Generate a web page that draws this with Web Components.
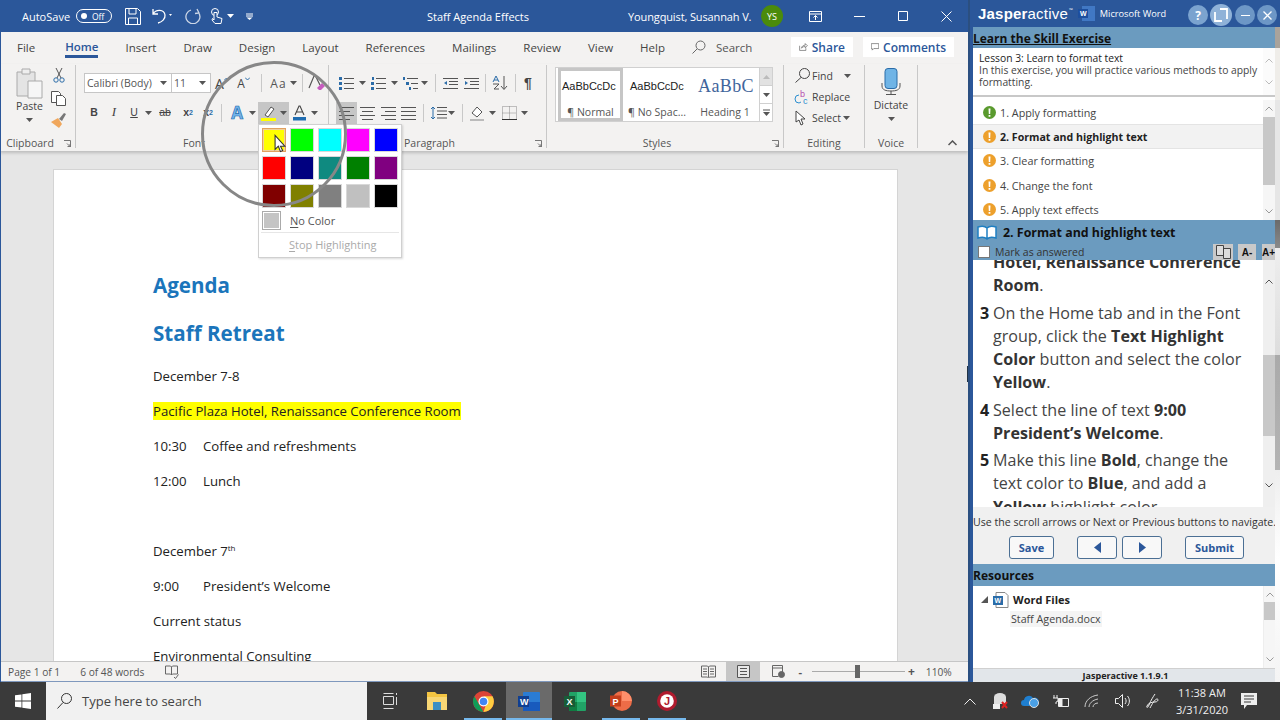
<!DOCTYPE html>
<html lang="en">
<head>
<meta charset="utf-8">
<title>Word and Jasperactive</title>
<style>
html,body{margin:0;padding:0;width:1280px;height:720px;overflow:hidden;background:#3a3a3a}
body{font-family:"Open Sans","Noto Sans",sans-serif;position:relative}
#screen{display:grid;grid-template-columns:968px 2px 310px;grid-template-rows:682px 38px;width:1280px;height:720px}
#gap{background:#2b4f80}
task-bar{grid-column:1 / 4}
</style>
</head>
<body>
<div id="screen">
  <word-window></word-window>
  <div id="gap"></div>
  <jasper-panel></jasper-panel>
  <task-bar></task-bar>
</div>
<script>
const caret = (c='#555') => `<svg width="7" height="4" viewBox="0 0 7 4"><path d="M0 0h7L3.5 4z" fill="${c}"/></svg>`

window.customElements.define('word-titlebar',
  class extends HTMLElement {
    constructor(){super(); this.attachShadow({mode:'open'});
      this.shadowRoot.innerHTML = `
<style>
:host{display:flex;align-items:center;height:32px;background:#2b579a;color:#fff;font-size:11px;padding-left:22px;box-sizing:border-box}
.as{width:48px;white-space:nowrap}
.tog{width:36px;height:14px;border:1px solid #fff;border-radius:8px;box-sizing:border-box;margin:0 13px 0 6px;display:flex;align-items:center;gap:5px;padding-left:4px;font-size:8.5px}
.tog i{width:6px;height:6px;background:#fff;border-radius:50%}
svg{display:block;flex:none}
.qat{display:flex;align-items:center;width:302px;gap:7px}
.title{width:100px;white-space:nowrap}
.user{margin-left:101px;width:122px;white-space:nowrap;letter-spacing:-.12px}
.av{width:22px;height:22px;border-radius:50%;background:#4b8b0b;font-size:9px;display:flex;align-items:center;justify-content:center;margin-left:11px;margin-right:11px}
.wb{display:flex;align-items:center;gap:0}
.wb span{width:43.5px;display:flex;justify-content:center}
</style>
<span class="as">AutoSave</span>
<div class="tog"><i></i>Off</div>
<div class="qat">
  <svg width="16" height="17" viewBox="0 0 16 17" fill="none" stroke="#fff"><path d="M.5.500h12l3 3v13H.5z"/><path d="M4 1v5h7V1M3.500 16v-6h9v6"/></svg>
  <svg width="20" height="16" viewBox="0 0 20 16" fill="none" stroke="#fff" stroke-width="1.300" style="margin-left:4px"><path d="M1 1v5h5M1 6c3-5 11-5 12 1 .5 4-3 7-7 8"/><path d="M17 6h3l-1.500 2z" fill="#fff" stroke="none"/></svg>
  <svg width="17" height="16" viewBox="0 0 17 16" fill="none" stroke="#ccd6e6" stroke-width="1.300" style="margin-left:6px"><path d="M12 1l2 4-4 .5M13.500 4.500A7 7 0 1 1 6 2"/></svg>
  <svg width="13" height="16" viewBox="0 0 13 16" fill="none" stroke="#fff" style="margin-left:1px"><circle cx="5" cy="4" r="3.500"/><path d="M4 4.500V12L2.500 10.500 2 12l3 3.500h6l1-5-5-1.500V4.500z" fill="#2b579a"/></svg>
  <svg width="7" height="4" viewBox="0 0 7 4" style="margin-left:-3px"><path d="M0 0h7L3.500 4z" fill="#fff"/></svg>
  <svg width="7" height="7" viewBox="0 0 7 7" style="margin-left:5px"><path d="M0 1h7M0 3h7" stroke="#fff"/><path d="M.5 4.500h6l-3 2.500z" fill="#fff"/></svg>
</div>
<span class="title">Staff Agenda Effects</span>
<span class="user">Youngquist, Susannah V.</span>
<span class="av">YS</span>
<div class="wb">
  <span><svg width="13" height="11" viewBox="0 0 13 11" fill="none" stroke="#fff"><path d="M.5 .5h12v10H.5zM.5 3h12M6.500 9V4.500M4.500 6.500l2-2 2 2"/></svg></span>
  <span><svg width="11" height="1" viewBox="0 0 11 1"><path d="M0 .5h11" stroke="#fff"/></svg></span>
  <span><svg width="10" height="10" viewBox="0 0 10 10" fill="none" stroke="#fff"><path d="M.5.500h9v9h-9z"/></svg></span>
  <span><svg width="11" height="11" viewBox="0 0 11 11" fill="none" stroke="#fff"><path d="M.5.500l10 10M10.500.500l-10 10"/></svg></span>
</div>`
    }
  })

window.customElements.define('word-tabs',
  class extends HTMLElement {
    constructor(){super(); this.attachShadow({mode:'open'});
      const tabs = ['File','Home','Insert','Draw','Design','Layout','References','Mailings','Review','View','Help']
      this.shadowRoot.innerHTML = `
<style>
:host{display:flex;align-items:flex-start;height:32px;background:#f3f2f1;color:#444;font-size:11.5px;padding-left:17px;box-sizing:border-box;position:relative}
.t{margin-right:27px;height:30px;display:flex;align-items:center;box-sizing:border-box;white-space:nowrap}
.file{margin-right:30px}
.on{color:#2b579a;font-weight:600;height:26px;border-bottom:3px solid #2b579a;padding-top:6px}
.s{display:flex;align-items:center;gap:10px;color:#555;height:30px}
.bt{margin-left:auto;display:flex;gap:10px;margin-right:14px;margin-top:5px;color:#2b579a;font-size:12px;font-weight:600}
.bt span{background:#fff;height:20px;display:flex;align-items:center;gap:4px;padding:0 8px;box-sizing:border-box}
</style>
${tabs.map(t=>`<span class="t${t=='Home'?' on':''}${t=='File'?' file':''}">${t}</span>`).join('')}
<span class="s"><svg width="14" height="14" viewBox="0 0 14 14" fill="none" stroke="#666"><circle cx="8.500" cy="5.500" r="4.500"/><path d="M5 9l-4.500 4.500"/></svg>Search</span>
<div class="bt">
  <span style="width:62px"><svg width="14" height="12" viewBox="0 0 14 12" fill="none" stroke="#555"><path d="M1 4v7.500h10V8M4 8c0-3 3-5 6-5V.5L13.500 4 10 7.500V5C7.500 5 5.500 6 4 8z"/></svg>Share</span>
  <span style="width:91px"><svg width="13" height="12" viewBox="0 0 13 12" fill="none" stroke="#555"><path d="M.5.500h12v8h-8L2 11V8.500H.5z"/></svg>Comments</span>
</div>`
    }
  })

window.customElements.define('rb-group',
  class extends HTMLElement {
    static get observedAttributes(){ return ["label"] }
    constructor(){super(); this.attachShadow({mode:'open'});
      const launch = this.hasAttribute('launch')
      this.shadowRoot.innerHTML = `
<style>
:host{display:flex;flex-direction:column;height:83px;box-sizing:border-box;border-right:1px solid #c8c8c8;position:relative;flex:none}
.b{height:71px;flex:none;overflow:visible}
.l{height:14px;flex:none;display:flex;justify-content:center;align-items:center;font-size:10.5px;color:#555;position:relative;box-sizing:border-box;${launch?'padding-right:16px':''}}
.l svg{position:absolute;right:4px;top:4px}
</style>
<div class="b"><slot></slot></div>
<div class="l">${this.getAttribute('label')}${launch?`<svg width="7" height="7" viewBox="0 0 7 7" fill="none" stroke="#777"><path d="M0 .5h6.500V7M3 3.500l3 3M6 4v2.500H3.500"/></svg>`:''}</div>`
    }
  })

window.customElements.define('word-ribbon',
  class extends HTMLElement {
    constructor(){super(); this.attachShadow({mode:'open'});
      const al = w => `<svg width="17" height="13" viewBox="0 0 17 13" fill="none">${[.5,4.500,8.500,12.500].map((y,i)=>{
        const x1 = w=='c'?(i%2?3:1):w=='r'?(i%2?5:1):1
        const x2 = w=='c'?(i%2?14:16):w=='l'?(i%2?12:16):16
        return `<path d="M${x1} ${y}H${x2}" stroke="#555"/>`}).join('')}</svg>`
      this.shadowRoot.innerHTML = `
<style>
:host{display:flex;height:87px;background:#f3f2f1;padding-top:1px;box-sizing:border-box;color:#444;font-size:10.5px;position:relative;box-shadow:0 2px 3px rgba(0,0,0,.18);z-index:1}
svg{display:block;flex:none}
.row{display:flex;align-items:center;height:22px}
.c{display:flex;align-items:center;justify-content:center;flex:none;height:22px;box-sizing:border-box}
.tx{padding-bottom:2px}
.sp{width:1px;height:18px;background:#c8c8c8;flex:none}
.box{background:#fff;border:1px solid #c6c6c6;height:20px;box-sizing:border-box;display:flex;align-items:center;justify-content:space-between;padding:0 4px 0 2px;font-size:10.500px;flex:none;color:#555;white-space:nowrap}
.big{display:flex;flex-direction:column;align-items:center}
.big span{line-height:15px}
.clip{display:flex;padding:3px 0 0 15px;gap:8px}
.side{display:flex;flex-direction:column;align-items:center;width:15px;gap:7.500px}
.gal{display:flex;width:218px;height:55px;margin:2px 0 0 8px;background:#fff;border:1px solid #d0d0d0;box-sizing:border-box;padding-left:2px}
.st{display:flex;flex-direction:column;align-items:center;justify-content:space-between;padding:6px 0 2px;box-sizing:border-box;font-size:10.500px;color:#555;white-space:nowrap;overflow:hidden;flex:none;width:68px}
.st em{font-style:normal;color:#222;font-family:"Liberation Sans",sans-serif;font-size:11px;height:24px;display:flex;align-items:center;align-self:flex-start;margin-left:7px}
.sel{outline:3px solid #c6c6c6;outline-offset:-3px;width:65px}
.sel em{margin-left:4px}
.sb{margin-left:auto;width:13px;border-left:1px solid #d0d0d0;display:flex;flex-direction:column}
.sb span{flex:1;display:flex;align-items:center;justify-content:center;border-bottom:1px solid #d0d0d0}
.ed{display:flex;flex-direction:column;gap:0;padding:0 0 0 11px}
.ed div{display:flex;align-items:center;gap:2px;height:21px;white-space:nowrap}
.coll{position:absolute;right:11px;bottom:5px}
</style>

<rb-group label="Clipboard" launch style="width:75px;margin-left:1px">
  <div class="clip">
    <div class="big">
      <svg width="27" height="31" viewBox="0 0 27 31"><path d="M1 4h18v24H1z" fill="#e4e4e4" stroke="#aaa"/><path d="M6 1h8v5H6z" fill="#eee" stroke="#aaa"/><path d="M12 13h14v17H12z" fill="#f6f6f6" stroke="#aaa"/></svg>
      <span>Paste</span>
      <span style="margin-top:4px">${caret()}</span>
    </div>
    <div class="side">
      <svg width="12" height="15" viewBox="0 0 12 15" fill="none" stroke="#2b6ca8"><circle cx="3" cy="12" r="2.200"/><circle cx="9" cy="12" r="2.200"/><path d="M4 10L9 0M8 10L3 0" stroke="#555"/></svg>
      <svg width="15" height="15" viewBox="0 0 15 15" fill="#fff" stroke="#555"><path d="M.5.500h7l2 2v9h-9z"/><path d="M5.500 4.500h6l3 3v7h-9z"/></svg>
      <svg width="15" height="15" viewBox="0 0 15 15"><path d="M0 9l7-4 4 6-3 4z" fill="#f0a75c"/><path d="M8 6l5-6 2 1-4 7z" fill="#777"/></svg>
    </div>
  </div>
</rb-group>

<rb-group label="Font" launch style="width:253px">
  <div style="padding:8px 0 0 8px;position:relative">
    <div class="row" style="height:20px">
      <span class="box" style="width:88px">Calibri (Body)${caret()}</span>
      <span class="box" style="width:39px;border-left:0">11${caret()}</span>
      <span class="c" style="width:22px;height:20px;font-size:14px">A<svg width="5" height="4" viewBox="0 0 5 4" style="margin:-8px 0 0 0" fill="none" stroke="#2b6ca8"><path d="M0 3.500L2.500 1 5 3.500"/></svg></span>
      <span class="c" style="width:21px;height:20px;font-size:12px">A<svg width="5" height="4" viewBox="0 0 5 4" style="margin:-8px 0 0 0" fill="none" stroke="#2b6ca8"><path d="M0 .5L2.500 3 5 .5"/></svg></span>
      <span class="sp" style="margin:0 7px"></span>
      <span class="c" style="width:19px;height:20px;font-size:12px;letter-spacing:1px;color:#555">Aa</span><span class="c" style="width:11px;height:20px">${caret()}</span>
      <span class="sp" style="margin:0 5px 0 3px"></span>
      <svg width="17" height="17" viewBox="0 0 17 17"><path d="M1 13L6 1h1.500L12 10" fill="none" stroke="#555" stroke-width="1.200"/><path d="M9 13l5-5 3 3-4 4h-2z" fill="#c75cc0"/></svg>
    </div>
    <div class="row" style="margin-top:9px">
      <span class="c tx" style="width:20px;font-weight:700;font-family:'Liberation Sans'">B</span>
      <span class="c tx" style="width:20px;font-style:italic;font-family:'Liberation Serif';font-size:13px">I</span>
      <span class="c tx" style="width:20px;text-decoration:underline;font-family:'Liberation Sans'">U</span>
      <span class="c" style="width:8px">${caret()}</span>
      <span class="c tx" style="width:26px;text-decoration:line-through;font-family:'Liberation Sans'">ab</span>
      <span class="c tx" style="width:20px;font-weight:700;font-family:'Liberation Sans'">x<sub style="font-size:7px;color:#2b6ca8">2</sub></span>
      <span class="c tx" style="width:20px;font-weight:700;font-family:'Liberation Sans'">x<sup style="font-size:7px;color:#2b6ca8">2</sup></span>
      <span class="sp" style="margin:0 4px 0 3px"></span>
      <span class="c tx" style="width:22px;font-size:17px;font-weight:700;color:#74b4ea;-webkit-text-stroke:.7px #1f6cb0">A</span>
      <span class="c" style="width:8px">${caret()}</span>
      <span class="c" style="width:31px;margin-left:2px;gap:4px;background:#c6c6c6">
        <svg width="16" height="16" viewBox="0 0 16 16"><path d="M5 10l6-8 3 2-6 8z" fill="#fff" stroke="#555"/><path d="M1 13h15v3H1z" fill="#ff0"/></svg>${caret()}
      </span>
      <span class="c" style="width:20px;position:relative"><svg width="15" height="16" viewBox="0 0 15 16"><path d="M3 10L7 1h1l4 9M4.500 7h6" fill="none" stroke="#444" stroke-width="1.100"/><path d="M1 12h13v3.500H1z" fill="#1f6cb0"/></svg></span>
      <span class="c" style="width:10px">${caret()}</span>
    </div>
  </div>
</rb-group>

<rb-group label="Paragraph" launch style="width:218px">
  <div style="padding:8px 0 0 7px">
    <div class="row" style="height:20px;padding-left:3px">
      <svg width="15" height="13" viewBox="0 0 15 13"><path d="M0 0h3v3H0zM0 5h3v3H0zM0 10h3v3H0z" fill="#2b6ca8"/><path d="M5 1.500h10M5 6.500h10M5 11.500h10" stroke="#555"/></svg>
      <span class="c" style="width:17px;height:20px">${caret()}</span>
      <svg width="15" height="13" viewBox="0 0 15 13"><path d="M1 0h2v3H1zM0 5h3v3H0zM0 10h3v3H0z" fill="#2b6ca8"/><path d="M5 1.500h10M5 6.500h10M5 11.500h10" stroke="#555"/></svg>
      <span class="c" style="width:17px;height:20px">${caret()}</span>
      <svg width="15" height="13" viewBox="0 0 15 13"><path d="M0 0h2v3H0zM3 5h3v3H3zM6 10h2v3H6z" fill="#2b6ca8"/><path d="M4 1.500h11M8 6.500h7M10 11.500h5" stroke="#555"/></svg>
      <span class="c" style="width:13px;height:20px">${caret()}</span>
      <span class="sp" style="margin:0 7px 0 4px"></span>
      <svg width="15" height="11" viewBox="0 0 15 11" fill="none"><path d="M0 .5h15M6 3.500h9M6 6.500h9M0 10.500h15" stroke="#555"/><path d="M4 3L1 5l3 2z" fill="#2b6ca8"/></svg>
      <svg width="15" height="11" viewBox="0 0 15 11" fill="none" style="margin-left:6px"><path d="M0 .5h15M6 3.500h9M6 6.500h9M0 10.500h15" stroke="#555"/><path d="M1 3l3 2-3 2z" fill="#2b6ca8"/></svg>
      <span class="sp" style="margin:0 6px"></span>
      <svg width="16" height="16" viewBox="0 0 16 16"><path d="M12 1v13M9 11l3 3.500 3-3.500" fill="none" stroke="#555"/><path d="M1 7l3-6 3 6M2 5h4" fill="none" stroke="#2b6ca8"/><path d="M1 9h6l-5 5h5" fill="none" stroke="#555"/></svg>
      <span class="sp" style="margin:0 6px 0 7px"></span>
      <span style="font-size:14px;font-weight:700;color:#444;font-family:'Liberation Sans';margin-left:2px">¶</span>
    </div>
    <div class="row" style="margin-top:9px">
      <span class="c" style="width:21px;background:#c6c6c6">${al('l')}</span>
      <span class="c" style="width:21px">${al('c')}</span>
      <span class="c" style="width:20px">${al('r')}</span>
      <span class="c" style="width:20px">${al('j')}</span>
      <span class="sp" style="margin:0 6px 0 5px"></span>
      <svg width="17" height="14" viewBox="0 0 17 14" fill="none"><path d="M3 1v12M1 3l2-2 2 2M1 11l2 2 2-2" stroke="#2b6ca8"/><path d="M7 1.500h10M7 5h10M7 8.500h10M7 12h10" stroke="#555"/></svg>
      <span class="c" style="width:8px">${caret()}</span>
      <span class="sp" style="margin:0 7px 0 7px"></span>
      <svg width="16" height="15" viewBox="0 0 16 15"><path d="M2 7l5-6 5 5-5 5z" fill="#fff" stroke="#555"/><path d="M0 13h14v2H0z" fill="#bbb"/></svg>
      <span class="c" style="width:13px">${caret()}</span>
      <span style="width:3px"></span>
      <svg width="15" height="14" viewBox="0 0 15 14" fill="none"><path d="M.5 .5h14v13H.5zM7.500 .5v13M.5 7h14" stroke="#888" stroke-dasharray="1 1"/><path d="M0 13.500h15" stroke="#333"/></svg>
      <span class="c" style="width:15px">${caret()}</span>
    </div>
  </div>
</rb-group>

<rb-group label="Styles" launch style="width:237px">
  <div class="gal">
    <div class="st sel"><em>AaBbCcDc</em><span>¶ Normal</span></div>
    <div class="st"><em>AaBbCcDc</em><span>¶ No Spac...</span></div>
    <div class="st"><em style="font-family:'Liberation Serif';font-size:18px;color:#3f659c;letter-spacing:.4px">AaBbC</em><span>Heading 1</span></div>
    <div class="sb">
      <span style="background:#e2e2e2"><svg width="7" height="4" viewBox="0 0 7 4"><path d="M3.500 0L7 4H0z" fill="#bbb"/></svg></span>
      <span>${caret()}</span>
      <span style="border:0"><svg width="7" height="7" viewBox="0 0 7 7"><path d="M0 1h7" stroke="#555"/><path d="M0 3h7L3.500 7z" fill="#555"/></svg></span>
    </div>
  </div>
</rb-group>

<rb-group label="Editing" style="width:81px">
  <div class="ed">
    <div><svg width="15" height="15" viewBox="0 0 15 15" fill="none" stroke="#444"><circle cx="9.500" cy="5.500" r="5"/><path d="M6 9.500L.5 14.500"/></svg>Find<span style="margin-left:9px">${caret()}</span></div>
    <div style="margin-left:-1px"><svg width="16" height="16" viewBox="0 0 16 16" fill="none"><text x="6" y="8" font-size="9" fill="#b650b0" font-family="Liberation Sans">b</text><text x="9" y="15" font-size="9" fill="#2b8ed0" font-family="Liberation Sans">c</text><path d="M5 6A4 4 0 0 0 5 14l2-1" stroke="#2b8ed0"/></svg>Replace</div>
    <div><svg width="13" height="16" viewBox="0 0 13 16" fill="#fff" stroke="#444" style="margin-right:2px"><path d="M1 1v11l3-2 2 5 2-1-2-5h4z"/></svg>Select${caret()}</div>
  </div>
</rb-group>

<rb-group label="Voice" style="width:53px">
  <div class="big" style="padding-top:3px">
    <svg width="20" height="27" viewBox="0 0 20 27"><rect x="4" y=".5" width="12" height="20" rx="3" fill="#6fb4e6" stroke="#2b6ca8"/><path d="M1 15v3c0 4 4 5 9 5s9-1 9-5v-3M10 23v3M5 26.500h10" fill="none" stroke="#555"/></svg>
    <span style="margin-top:3px">Dictate</span>
    <span style="margin-top:4px">${caret()}</span>
  </div>
</rb-group>

<svg class="coll" width="9" height="6" viewBox="0 0 9 6" fill="none" stroke="#555" stroke-width="1.500"><path d="M.5 5l4-4 4 4"/></svg>`
    }
  })

window.customElements.define('hl-menu',
  class extends HTMLElement {
    constructor(){super(); this.attachShadow({mode:'open'});
      const colors = ['#ffff00','#00ff00','#00ffff','#ff00ff','#0000ff','#ff0000','#000080','#0f8a80','#008000','#800080','#800000','#808000','#808080','#c0c0c0','#000000']
      this.shadowRoot.innerHTML = `
<style>
:host{display:block;position:absolute;left:258px;top:124px;width:144px;height:134px;background:#fff;border:1px solid #d0d0d0;box-sizing:border-box;box-shadow:1px 1px 2px rgba(0,0,0,.15);z-index:2;font-size:11px;color:#555}
.g{display:grid;grid-template-columns:repeat(5,24px);gap:4px;padding:3px 0 0 3px}
.g i{height:24px;box-sizing:border-box;border:1px solid #d8d8d8}
.g i.on{border:1px solid #e0a060;outline:1px solid #f0d0a0;outline-offset:-2px}
.n{display:flex;align-items:center;gap:9px;margin:2px 0 0 3px;height:20px}
.n i{width:19px;height:19px;background:#c4c4c4;border:2px solid #fff;outline:1px solid #aaa;outline-offset:-1px;box-sizing:border-box}
hr{margin:2px 2px 0;border:0;border-top:1px solid #e6e6e6}
.s{color:#aaa;padding:4px 0 0 30px}
u{text-underline-offset:2px}
</style>
<div class="g">${colors.map((c,i)=>`<i class="${i?'':'on'}" style="background:${c}"></i>`).join('')}</div>
<div class="n"><i></i><span><u>N</u>o Color</span></div>
<hr>
<div class="s"><u>S</u>top Highlighting</div>`
    }
  })

window.customElements.define('doc-page',
  class extends HTMLElement {
    constructor(){super(); this.attachShadow({mode:'open'});
      this.shadowRoot.innerHTML = `
<style>
:host{display:block;flex:1;min-height:0;background:#e6e6e6;padding:19px 0 0 54px;box-sizing:border-box;overflow:hidden}
.p{width:843px;height:600px;background:#fff;box-shadow:0 0 0 1px #d4d4d4;padding:98px 0 0 99px;box-sizing:border-box;font-size:13.200px;color:#222}
h1{font-size:20.600px;line-height:35px;margin:0 0 13px;color:#1b75bb;font-weight:700}
h1+h1{margin-bottom:16px}
p{margin:0;height:35px;line-height:18px;white-space:nowrap}
mark{background:#ff0;color:inherit}
i{font-style:normal;display:inline-block;width:50px}
sup{font-size:8px;line-height:0}
</style>
<div class="p">
  <h1>Agenda</h1>
  <h1>Staff Retreat</h1>
  <p>December 7-8</p>
  <p><mark>Pacific Plaza Hotel, Renaissance Conference Room</mark></p>
  <p><i>10:30</i>Coffee and refreshments</p>
  <p><i>12:00</i>Lunch</p>
  <p></p>
  <p>December 7<sup>th</sup></p>
  <p><i>9:00</i>President’s Welcome</p>
  <p>Current status</p>
  <p>Environmental Consulting</p>
</div>`
    }
  })

window.customElements.define('word-status',
  class extends HTMLElement {
    constructor(){super(); this.attachShadow({mode:'open'});
      this.shadowRoot.innerHTML = `
<style>
:host{display:flex;align-items:center;height:21px;background:#f3f2f1;border-top:1px solid #c6c6c6;border-bottom:1px solid #7f98bd;box-sizing:border-box;font-size:10.200px;color:#555;padding-left:8px;white-space:nowrap}
svg{display:block;flex:none}
.v{height:19px;display:flex;align-items:center;justify-content:center}
.z{width:93px;height:1px;background:#aaa;margin:0 3px 0 10px;position:relative}
.z i{position:absolute;left:43px;top:-6px;width:5px;height:13px;background:#666}
</style>
<span>Page 1 of 1</span>
<span style="margin-left:20px">6 of 48 words</span>
<svg width="14" height="14" viewBox="0 0 14 14" fill="none" stroke="#666" style="margin-left:21px"><path d="M.5 1h5l1 1 1-1h5v8h-5l-1 1-1-1h-5zM6.500 2v8M9 12l1.500 1.500 3-4"/></svg>
<svg width="15" height="13" viewBox="0 0 15 13" fill="none" stroke="#666" style="margin-left:522px"><path d="M.5 1h6l1 1 1-1h6v11h-6l-1 1-1-1h-6zM7.500 2v10M2 4h4M2 6.500h4M2 9h4M9 4h4M9 6.500h4M9 9h4"/></svg>
<span class="v" style="width:34px;background:#c6c6c6;margin-left:10px"><svg width="13" height="13" viewBox="0 0 13 13" fill="#e8e8e8" stroke="#555"><path d="M.5.500h12v12H.5zM3 3.500h7M3 6.500h7M3 9.500h7"/></svg></span>
<svg width="13" height="13" viewBox="0 0 13 13" fill="none" stroke="#666" style="margin-left:12px"><path d="M.5.500h10v8M.5.500v11h6M.5 3h10"/><circle cx="9.500" cy="9.500" r="3" fill="#666"/></svg>
<span style="margin-left:13px;font-weight:700;font-size:11px">-</span>
<span class="z"><i></i></span>
<span style="font-weight:700;font-size:12px">+</span>
<span style="margin-left:11px">110%</span>`
    }
  })

window.customElements.define('word-window',
  class extends HTMLElement {
    constructor(){super(); this.attachShadow({mode:'open'});
      this.shadowRoot.innerHTML = `
<style>
:host{display:flex;flex-direction:column;height:682px;position:relative;box-sizing:border-box;overflow:hidden}
:host::before{content:"";position:absolute;left:0;top:0;bottom:0;width:1px;background:#2b579a;z-index:5}
.dot{position:absolute;left:201px;top:61px;width:146px;height:146px;border:3px solid #878787;border-radius:50%;box-sizing:border-box;z-index:3}
.cur{position:absolute;left:274px;top:134px;z-index:4}
.mark{position:absolute;left:967px;top:366px;width:1px;height:16px;background:#234;z-index:5}
</style>
<word-titlebar></word-titlebar>
<word-tabs></word-tabs>
<word-ribbon></word-ribbon>
<doc-page></doc-page>
<word-status></word-status>
<hl-menu></hl-menu>
<div class="dot"></div>
<svg class="cur" width="13" height="19" viewBox="0 0 12 17"><path d="M1 1v13l3-3 2 5 2-1-2-4h4z" fill="#fff" stroke="#333"/></svg>
<div class="mark"></div>`
    }
  })

window.customElements.define('step-row',
  class extends HTMLElement {
    constructor(){super(); this.attachShadow({mode:'open'});
      const green = this.hasAttribute('done')
      const c = green?'#5a9a2e':'#eda02c'
      this.shadowRoot.innerHTML = `
<style>
:host{display:flex;align-items:center;gap:4px;height:24.400px;padding-left:10px;font-size:10.800px;color:#444;box-sizing:border-box;white-space:nowrap}
:host([on]){background:#f2f2f2;font-weight:700;color:#222;border-top:1px solid #e4e4e4;border-bottom:1px solid #e4e4e4;font-size:10.600px}
svg{flex:none}
</style>
<svg width="13" height="13" viewBox="0 0 13 13"><circle cx="6.500" cy="6.500" r="6.500" fill="${c}"/><path d="M5.500 2.500h2l-.3 5.500H5.800zM5.600 9h1.800v1.800H5.600z" fill="#fff"/></svg>
<slot></slot>`
    }
  })

window.customElements.define('scroll-track',
  class extends HTMLElement {
    constructor(){super(); this.attachShadow({mode:'open'});
      const t = this.getAttribute('top')||20, h = this.getAttribute('thumb')||0
      const inset = this.getAttribute('inset')||6, ar = this.getAttribute('arrow')||'#999'
      this.shadowRoot.innerHTML = `
<style>
:host{display:block;width:12px;flex:none;background:#f6f6f6;position:relative;box-sizing:border-box}
i{position:absolute;left:0;right:0;background:#c8c8c8}
svg{position:absolute;left:2px}
</style>
<svg width="8" height="5" viewBox="0 0 8 5" fill="none" stroke="${ar}" style="top:${inset}px"><path d="M.5 4.500L4 1l3.500 3.500"/></svg>
${h?`<i style="top:${t}px;height:${h}px"></i>`:''}
<svg width="8" height="5" viewBox="0 0 8 5" fill="none" stroke="${ar}" style="bottom:${inset}px"><path d="M.5.5L4 4 7.500.5"/></svg>`
    }
  })

window.customElements.define('jasper-panel',
  class extends HTMLElement {
    constructor(){super(); this.attachShadow({mode:'open'});
      this.shadowRoot.innerHTML = `
<style>
:host{display:flex;height:682px;background:#fff;position:relative;overflow:hidden;color:#333}
.main{width:305px;flex:none;display:flex;flex-direction:column;border-left:3px solid #2b579a;box-sizing:border-box}
.edge{width:5px;background:linear-gradient(#a9a39b 48px,#efede9 48px,#efede9 100px,#e6e6e6 100px,#e6e6e6 220px,#6a6a6a 220px,#8a8a8a 248px,#eee 248px,#ddd 355px,#aaa 355px,#b4b4b4 470px,#eee 470px,#fff 560px,#f4f4f4 680px)}
.hd{height:27px;background:#2b579a;color:#fff;display:flex;align-items:center;padding-left:4px;box-sizing:border-box;white-space:nowrap;margin-right:-5px;position:relative;flex:none}
.hd .j{font-family:"Liberation Sans",sans-serif;font-size:15px;letter-spacing:.2px}
.hd small{font-size:9.200px;margin-left:5px}
.btns{display:flex;gap:2px;position:absolute;left:215px;top:4px;align-items:center}
.btns span{width:20px;height:20px;border-radius:50%;background:#7ba3cf;display:flex;align-items:center;justify-content:center;font-size:12px;font-weight:700;box-sizing:border-box}
.sec{height:21px;background:#6b9bbf;color:#111;font-size:12px;font-weight:700;display:flex;align-items:center;white-space:nowrap;text-decoration:underline;padding-top:2px;box-sizing:border-box;flex:none}
.intro{height:49px;display:flex;border-bottom:2px solid #c8c8c8;box-sizing:border-box;font-size:10.300px;line-height:12px;padding:4px 0 0 6px;position:relative;color:#444;margin-bottom:3px;flex:none}
.intro b{font-weight:400;color:#222;display:block}
.intro div{width:285px}
.intro scroll-track{position:absolute;right:0;top:0;bottom:0;background:#fbfbfb}
.steps{height:120px;display:flex;overflow:hidden;flex:none}
.steps>div{flex:1;min-width:0}
.strip{height:40px;background:#6b9bbf;position:relative;flex:none}
.strip .t{display:flex;align-items:center;gap:6px;height:24px;padding-left:4px;font-size:12.400px;font-weight:700;color:#111;white-space:nowrap}
.strip .m{display:flex;align-items:center;gap:5px;padding-left:5px;height:16px;font-size:10.500px;color:#333;position:relative}
.strip .m i{width:12px;height:12px;background:#fff;border:1px solid #777;box-sizing:border-box}
.tools{margin-left:auto;display:flex;height:16px;align-items:flex-end}
.tools span{background:#c9c9c9;height:16px;display:flex;align-items:center;justify-content:center;font-size:10px;font-weight:700;color:#111;font-family:"Liberation Sans";overflow:hidden}
.read{height:247px;display:flex;flex:none;overflow:hidden}
.txt{flex:1;min-width:0;overflow:hidden;font-size:16.100px;line-height:23.200px;color:#444;padding-right:10px}
.txt .in{margin-top:-9px}
.txt p{margin:0 0 4.200px;padding-left:20px;position:relative}
.txt p>span{position:absolute;left:7px;font-weight:700;color:#222}
.txt b{color:#333}
.nav{height:57px;background:#f0f0f0;flex:none;font-size:10.600px;color:#333;white-space:nowrap}
.nav .h{height:29px;display:flex;align-items:center;padding-top:1px;box-sizing:border-box}
.nav .r{display:flex;padding:0 0 0 36px}
.nav button{height:23px;background:#f8f8f8;border:1px solid #4b6f94;border-radius:3px;font:700 11px "Open Sans",sans-serif;color:#2b579a;display:flex;align-items:center;justify-content:center;padding:0;box-sizing:border-box}
.res{height:22px;background:#6b9bbf;font-size:12px;font-weight:700;color:#111;display:flex;align-items:center;flex:none}
.tree{height:82px;display:flex;flex:none;font-size:11px}
.tree>div{flex:1;min-width:0;padding:5px 0 0 8px}
.tree .w{display:flex;align-items:center;gap:4px;font-weight:700;color:#222;height:17px}
.tree .f{display:inline-block;margin:3px 0 0 29px;background:#f4f4f4;padding:1px 1px;font-size:10.700px;color:#444}
.ver{flex:1;background:#e2e6ea;border-top:1px solid #d0d0d0;font-size:9px;font-weight:700;color:#222;display:flex;align-items:center;justify-content:center;box-sizing:border-box;padding-left:3px}
</style>
<div class="main">
  <div class="hd">
    <span class="j" style="margin-left:1px"><b>Jasper</b>active</span><sup style="font-size:5px;margin:-8px 0 0 1px">™</sup>
    <svg width="17" height="15" viewBox="0 0 17 15" style="margin-left:5px"><rect x="4" y="0" width="13" height="15" fill="#4178c4"/><rect x="0" y="3" width="10" height="9" fill="#1d4f9e"/><text x="2" y="10" font-size="7" font-weight="700" fill="#fff" font-family="Liberation Sans">W</text></svg>
    <small>Microsoft Word</small>
    <div class="btns">
      <span>?</span>
      <span style="width:22px;height:22px;background:#8fb2d8"><svg width="14" height="14" viewBox="0 0 14 14" fill="none" stroke="#fff" stroke-width="1.800"><path d="M6 1h7v10M8 13H1V4"/></svg></span>
      <span style="background:#6d97c6;margin-left:1px"><svg width="9" height="1" viewBox="0 0 9 1"><path d="M0 .5h9" stroke="#fff"/></svg></span>
      <span style="background:#6d97c6"><svg width="9" height="9" viewBox="0 0 9 9" fill="none" stroke="#fff" stroke-width="1.300"><path d="M.5.500l8 8M8.500.500l-8 8"/></svg></span>
    </div>
  </div>
  <div class="sec">Learn the Skill Exercise</div>
  <div class="intro"><div><b>Lesson 3: Learn to format text</b>In this exercise, you will practice various methods to apply formatting.</div><scroll-track inset="10" arrow="#bbb"></scroll-track></div>
  <div class="steps">
    <div>
      <step-row done>1. Apply formatting</step-row>
      <step-row on>2. Format and highlight text</step-row>
      <step-row>3. Clear formatting</step-row>
      <step-row>4. Change the font</step-row>
      <step-row>5. Apply text effects</step-row>
    </div>
    <scroll-track top="17" thumb="68"></scroll-track>
  </div>
  <div class="strip">
    <div class="t"><svg width="20" height="15" viewBox="0 0 20 15" fill="#fff" stroke="#1f7fc2" stroke-width="1.500"><path d="M10 3C8 1 4 1 1 2v11c3-1 7-1 9 1 2-2 6-2 9-1V2c-3-1-7-1-9 1zM10 3v11"/></svg>2. Format and highlight text</div>
    <div class="m"><i></i>Mark as answered
      <div class="tools">
        <span style="width:20px"><svg width="15" height="14" viewBox="0 0 15 14" fill="#ddd" stroke="#444"><path d="M.5.500h7v10h-7zM7.500 3.500h7v10h-7z"/></svg></span>
        <span style="width:18px;margin-left:5px">A-</span><span style="width:13px;margin-left:6px;justify-content:flex-start">A+</span>
      </div>
    </div>
  </div>
  <div class="read">
    <div class="txt"><div class="in">
      <p><b>Hotel, Renaissance Conference Room</b>.</p>
      <p><span>3</span>On the Home tab and in the Font group, click the <b>Text Highlight Color</b> button and select the color <b>Yellow</b>.</p>
      <p><span>4</span>Select the line of text <b>9:00 President’s Welcome</b>.</p>
      <p><span>5</span>Make this line <b>Bold</b>, change the text color to <b>Blue</b>, and add a <b>Yellow</b> highlight color.</p>
    </div></div>
    <scroll-track top="95" thumb="81" inset="19" arrow="#555" style="background:#efefef"></scroll-track>
  </div>
  <div class="nav">
    <div class="h">Use the scroll arrows or Next or Previous buttons to navigate.</div>
    <div class="r">
      <button style="width:45px">Save</button>
      <button style="width:40px;margin-left:23px"><svg width="7" height="11" viewBox="0 0 7 11"><path d="M7 0v11L0 5.500z" fill="#2b579a"/></svg></button>
      <button style="width:40px;margin-left:5px"><svg width="7" height="11" viewBox="0 0 7 11"><path d="M0 0v11l7-5.500z" fill="#2b579a"/></svg></button>
      <button style="width:59px;margin-left:23px">Submit</button>
    </div>
  </div>
  <div class="res">Resources</div>
  <div class="tree">
    <div>
      <div class="w">
        <svg width="7" height="7" viewBox="0 0 7 7"><path d="M7 0v7H0z" fill="#555"/></svg>
        <svg width="16" height="16" viewBox="0 0 16 16" style="margin:0 0 0 1px"><path d="M3 .5h9l3 3v12H3z" fill="#fff" stroke="#888"/><rect x="0" y="4" width="10" height="9" fill="#2b6ca8"/><text x="1.500" y="11" font-size="7" font-weight="700" fill="#fff" font-family="Liberation Sans">W</text></svg>
        Word Files
      </div>
      <span class="f">Staff Agenda.docx</span>
    </div>
    <scroll-track top="16" thumb="18" style="border-left:1px solid #eee"></scroll-track>
  </div>
  <div class="ver">Jasperactive 1.1.9.1</div>
</div>
<div class="edge"></div>`
    }
  })

window.customElements.define('task-bar',
  class extends HTMLElement {
    constructor(){super(); this.attachShadow({mode:'open'});
      const app = (svg,on,run) => `<span class="a${on?' on':''}${run?' run':''}">${svg}</span>`
      this.shadowRoot.innerHTML = `
<style>
:host{display:flex;align-items:center;height:38px;background:#3a3a3a;color:#f0f0f0;font-size:11px;overflow:hidden}
svg{display:block;flex:none}
.win{width:46px;display:flex;justify-content:center}
.s{width:321px;height:38px;background:#f1f1f1;display:flex;align-items:center;gap:10px;padding-left:11px;box-sizing:border-box;color:#444;font-size:13px;white-space:nowrap}
.apps{display:flex;margin-left:1px}
.a{width:46px;height:38px;display:flex;align-items:center;justify-content:center;box-sizing:border-box;position:relative}
.on{background:#6a6a6a}
.run::after{content:"";position:absolute;left:4px;right:4px;bottom:0;height:2px;background:#76b9ed}
.on.run::after{left:0;right:0}
.tray{margin-left:auto;display:flex;align-items:center;margin-right:15px}
.tray>span{display:flex;justify-content:center;width:30.500px}
.clk{width:66px;text-align:center;line-height:17px;font-size:11px;white-space:nowrap;margin-left:1px}
.n{width:30px;display:flex;justify-content:center}
</style>
<div class="win"><svg width="16" height="16" viewBox="0 0 16 16" fill="#fff"><path d="M0 2.300l6.500-.9v6.200H0zM7.300 1.300L16 0v7.600H7.300zM0 8.400h6.500v6.200L0 13.700zM7.300 8.400H16V16l-8.700-1.300z"/></svg></div>
<div class="s"><svg width="15" height="16" viewBox="0 0 15 16" fill="none" stroke="#333"><circle cx="9.500" cy="5.500" r="5"/><path d="M6 9.500L.5 15.500"/></svg>Type here to search</div>
<div class="apps">
  ${app(`<svg width="16" height="16" viewBox="0 0 16 16" fill="none" stroke="#ddd"><path d="M.5.500h10M.5 15.500h10M.5 3.500h10v8H.5zM13.500 0v2M13.500 4v8" /></svg>`)}
  ${app(`<svg width="21" height="18" viewBox="0 0 21 18"><path d="M0 0h8l2 2h10v16H0z" fill="#f4c542"/><path d="M0 5h20v13H0z" fill="#f8d775"/><path d="M6 10h8v8H6z" fill="#3b8fc4"/></svg>`)}
  ${app(`<svg width="21" height="21" viewBox="0 0 21 21"><circle cx="10.500" cy="10.500" r="10.500" fill="#db4437"/><path d="M10.500 21A10.500 10.500 0 0 1 1.400 5.300l5 8.700z" fill="#0f9d58"/><path d="M10.500 21a10.500 10.500 0 0 0 9-15.700h-9l4 3.500z" fill="#ffcd40"/><circle cx="10.500" cy="10.500" r="5" fill="#fff"/><circle cx="10.500" cy="10.500" r="3.800" fill="#4285f4"/></svg>`,0,1)}
  ${app(`<svg width="22" height="19" viewBox="0 0 22 19"><rect x="5" y="0" width="17" height="19" rx="1" fill="#2b7cd3"/><rect x="5" y="10" width="17" height="9" fill="#185abd"/><rect x="0" y="4" width="11" height="11" fill="#103f91"/><text x="2" y="13" font-size="9" font-weight="700" fill="#fff" font-family="Liberation Sans">W</text></svg>`,1,1)}
  ${app(`<svg width="22" height="19" viewBox="0 0 22 19"><rect x="5" y="0" width="17" height="19" rx="1" fill="#21a366"/><rect x="13" y="0" width="9" height="10" fill="#33c481"/><rect x="5" y="10" width="8" height="9" fill="#107c41"/><rect x="0" y="4" width="11" height="11" fill="#185c37"/><text x="2.500" y="13" font-size="9" font-weight="700" fill="#fff" font-family="Liberation Sans">X</text></svg>`)}
  ${app(`<svg width="22" height="20" viewBox="0 0 22 20"><circle cx="12" cy="10" r="10" fill="#ed6c47"/><path d="M12 0a10 10 0 0 1 10 10H12z" fill="#ff8f6b"/><rect x="0" y="4.500" width="11" height="11" fill="#c43e1c"/><text x="2.500" y="13.500" font-size="9" font-weight="700" fill="#fff" font-family="Liberation Sans">P</text></svg>`,0,1)}
  ${app(`<svg width="20" height="20" viewBox="0 0 20 20"><circle cx="10" cy="10" r="10" fill="#b01b2e"/><circle cx="10" cy="10" r="6.800" fill="#fff"/><text x="7" y="14" font-size="11" font-weight="700" fill="#b01b2e" font-family="Liberation Sans">J</text></svg>`,0,1)}
</div>
<div class="tray">
  <span><svg width="12" height="7" viewBox="0 0 12 7" fill="none" stroke="#eee"><path d="M.5 6.500L6 1l5.500 5.500"/></svg></span>
  <span><svg width="15" height="16" viewBox="0 0 15 16"><path d="M1 4a6 4 0 0 1 12 0v7H1z" fill="#ddd"/><path d="M0 11h7v5H0z" fill="#eee"/><path d="M9 9l5 6M14 9l-5 6" stroke="#d22" stroke-width="2"/></svg></span>
  <span><svg width="19" height="14" viewBox="0 0 19 14"><path d="M3 12a3 3 0 0 1 0-6 5 5 0 0 1 9-2 4 4 0 0 1 5 6l-3 2z" fill="#1f7fd0"/><circle cx="13" cy="9" r="4.500" fill="#4aa0e6" stroke="#ddd"/></svg></span>
  <span><svg width="16" height="13" viewBox="0 0 16 13" fill="none" stroke="#eee"><path d="M5.500 3.500h10v8h-10z"/><path d="M6 4h3v7H6z" fill="#eee"/><path d="M1 0v3M4 0v3M0 3h5v2a2 2 0 0 1-2 2v2" /></svg></span>
  <span><svg width="15" height="14" viewBox="0 0 15 14" fill="none" stroke="#ccc"><path d="M1 13C1 7 6 2 14 1M5 13c0-3 3-7 9-8M9 13c0-2 2-4 5-4"/></svg></span>
  <span><svg width="15" height="14" viewBox="0 0 15 14" fill="none" stroke="#eee"><path d="M.5 4.500h3l4-4v13l-4-4h-3zM10 4c1.500 2 1.500 4 0 6M12.500 2c2.500 3 2.500 7 0 10"/></svg></span>
  <span><svg width="14" height="17" viewBox="0 0 14 17" fill="none" stroke="#eee"><path d="M9 1C7 4 5 7 3 12c-1 3-3 3-2 1 1-3 5-4 8-4 3 0 4-3 2-3S6 11 4 15"/></svg></span>
  <div class="clk">11:38 AM<br>3/31/2020</div>
  <div class="n"><svg width="18" height="17" viewBox="0 0 18 17"><path d="M0 0h16v12H6l-3 4v-4H0z" fill="#eee"/><path d="M3 3h10M3 6h10M3 9h7" stroke="#3a3a3a"/></svg></div>
</div>`
    }
  })
</script>
</body>
</html>
